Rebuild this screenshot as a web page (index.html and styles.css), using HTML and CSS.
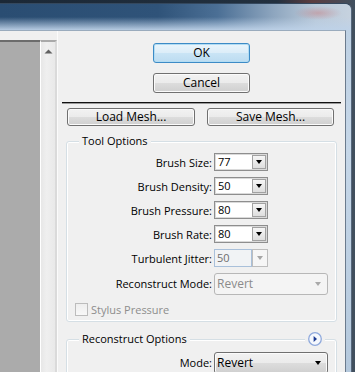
FILE: index.html
```html
<!DOCTYPE html>
<html>
<head>
    <title>Liquify</title>
    <link rel="stylesheet" href="styles.css">
</head>
<body>
    <div class="window">
        <div class="titlebar"></div>
        <div class="client">
            <div class="preview">
                <div class="canvas"></div>
                <div class="scrollbar">
                    <svg class="scroll-arrow" width="9" height="5" viewBox="0 0 9 5">
                        <path d="M0.5 4.5 L4.5 0.5 L8.5 4.5 Z" fill="#616161"/>
                    </svg>
                </div>
            </div>

            <div class="panel">
                <div class="dialog-buttons">
                    <button class="button default">OK</button>
                    <button class="button">Cancel</button>
                </div>

                <div class="rule"></div>

                <div class="mesh-buttons">
                    <button class="button small load">Load Mesh...</button>
                    <button class="button small save">Save Mesh...</button>
                </div>

                <fieldset class="group tool-options">
                    <legend><span class="legend-text">Tool Options</span></legend>

                    <div class="row">
                        <span class="label">Brush Size:</span>
                        <div class="combo"><span class="value">77</span><span class="drop"><i class="arrow"></i></span></div>
                    </div>
                    <div class="row">
                        <span class="label">Brush Density:</span>
                        <div class="combo"><span class="value">50</span><span class="drop"><i class="arrow"></i></span></div>
                    </div>
                    <div class="row">
                        <span class="label">Brush Pressure:</span>
                        <div class="combo"><span class="value">80</span><span class="drop"><i class="arrow"></i></span></div>
                    </div>
                    <div class="row">
                        <span class="label">Brush Rate:</span>
                        <div class="combo"><span class="value">80</span><span class="drop"><i class="arrow"></i></span></div>
                    </div>
                    <div class="row">
                        <span class="label">Turbulent Jitter:</span>
                        <div class="combo disabled"><span class="value">50</span><span class="drop"><i class="arrow"></i></span></div>
                    </div>
                    <div class="row row-select">
                        <span class="label">Reconstruct Mode:</span>
                        <div class="select disabled"><span class="value">Revert</span><i class="arrow"></i></div>
                    </div>
                    <div class="row row-check">
                        <span class="checkbox disabled"></span>
                        <span class="check-label">Stylus Pressure</span>
                    </div>
                </fieldset>

                <fieldset class="group reconstruct-options">
                    <legend class="wide">
                        <span class="legend-text">Reconstruct Options</span>
                        <span class="legend-line"></span>
                        <svg class="flyout" width="14" height="14" viewBox="0 0 14 14">
                            <circle cx="7" cy="7" r="6.3" fill="#f5f8fd" stroke="#8fa9dc" stroke-width="1.3"/>
                            <path d="M5.6 4 L9 7 L5.6 10 Z" fill="#1c3b93"/>
                        </svg>
                    </legend>

                    <div class="row row-select">
                        <span class="label">Mode:</span>
                        <div class="select"><span class="value">Revert</span><i class="arrow"></i></div>
                    </div>
                </fieldset>
            </div>
        </div>
    </div>
</body>
</html>
```

FILE: styles.css
```css
body {
    margin: 0;
    height: 372px;
    overflow: hidden;
    background: linear-gradient(to right, #1b2836 0%, #22303f 78%, #5b3d40 88%, #40505f 100%);
    font-family: "Open Sans", Arial, sans-serif;
    font-size: 11px;
    color: #000;
}

/* window frame */
.window {
    margin-top: 3px;
    width: 351px;
    height: 369px;
    border-top: 1px solid #34485e;
    border-right: 1px solid #56687c;
    border-top-right-radius: 7px;
    background: linear-gradient(to bottom, #bccfe2, #c6d7e8 40%, #b4c8dc);
    display: flex;
    flex-direction: column;
    overflow: hidden;
}
.titlebar {
    height: 26px;
    flex-shrink: 0;
    background:
        radial-gradient(ellipse 24px 7px at 318px 9px, rgba(200, 120, 122, 0.45), rgba(200, 120, 122, 0)),
        linear-gradient(to bottom, rgba(190, 210, 232, 0) 50%, rgba(190, 210, 232, 0.95) 100%),
        linear-gradient(to right, #2a4d72 0%, #2f5379 45%, #4b6f95 62%, #8ea6bf 78%, #b9c9d9 90%, #c6d2df 100%);
}
.client {
    flex: 1;
    display: flex;
    margin-right: 5px;
    background: #f0f0f0;
    border-top: 1px solid #9aabbd;
    border-right: 1px solid #6b7b8d;
}

/* preview area on the left */
.preview {
    display: flex;
    margin-top: 9px;
    width: 57px;
    flex-shrink: 0;
}
.canvas {
    width: 40px;
    background: #ababab;
    border-top: 2px solid #6c6c6c;
}
.scrollbar {
    width: 14px;
    display: flex;
    justify-content: center;
    align-items: flex-start;
    padding-top: 7px;
    background: linear-gradient(to right, #e7e7e7, #efefef 40%, #e9e9e9);
    border-top: 2px solid #a9a9a9;
    border-left: 1px solid #fff;
    border-right: 2px solid #dadada;
}

/* right panel */
.panel {
    flex: 1;
    display: flex;
    flex-direction: column;
    padding-top: 12px;
    border-left: 1px solid #fbfbfb;
}
.button {
    font-family: "Open Sans", Arial, sans-serif;
    font-size: 12px;
    color: #000;
    padding: 0;
    border: 1px solid #707070;
    border-radius: 3px;
    background: linear-gradient(#f2f2f2 0%, #ebebeb 50%, #dddddd 50%, #cfcfcf 100%);
    box-shadow: inset 0 0 0 1px #fbfbfb;
    cursor: pointer;
}
.dialog-buttons {
    display: flex;
    flex-direction: column;
    gap: 10px;
    margin-left: 95px;
}
.dialog-buttons .button {
    width: 97px;
    height: 20px;
    line-height: 16px;
}
.button.default {
    border-color: #3c8bc6;
    background: linear-gradient(#e9f5fc 0%, #dcedf8 48%, #c9e4f5 52%, #bcdcf1 100%);
    box-shadow: inset 0 0 0 1px #b2dcf3;
}
.rule {
    height: 1px;
    margin: 9px 4px 0 4px;
    background: #111;
    box-shadow: 0 1px 0 #9a9a9a;
}
.mesh-buttons {
    display: flex;
    gap: 12px;
    margin: 5px 0 0 9px;
}
.button.small {
    height: 18px;
    line-height: 14px;
}
.button.load {
    width: 128px;
}
.button.save {
    width: 127px;
}

/* group boxes */
.group {
    width: 269px;
    margin: 8px 0 0 8px;
    padding: 5px 0 5px 0;
    border: 1px solid #d5dfe5;
    border-radius: 3px;
    box-shadow: inset 0 0 0 1px #fff;
}
.reconstruct-options {
    margin-top: 10px;
    flex: 1;
}
.group legend {
    margin-left: 12px;
    padding: 0;
    line-height: 14px;
    background: #f0f0f0;
}
.legend-text {
    padding: 0 3px;
}
.group legend.wide {
    display: flex;
    align-items: center;
    width: 246px;
}
.legend-line {
    flex: 1;
    height: 0;
    border-top: 1px solid #d5dfe5;
    border-bottom: 1px solid #fff;
    margin-top: 1px;
}
.flyout {
    margin: 0 3px;
}

/* rows */
.row {
    display: flex;
    align-items: center;
    gap: 2px;
    height: 18px;
    margin-bottom: 6px;
}
.label {
    width: 145px;
    text-align: right;
    white-space: nowrap;
}
.row-select {
    height: 21px;
    margin-top: 1px;
    margin-bottom: 0;
}
.row-check {
    height: 13px;
    margin: 9px 0 0 8px;
    gap: 3px;
}

.combo {
    display: flex;
    width: 52px;
    height: 16px;
    border: 1px solid #8e8e8e;
    background: #fff;
    box-shadow: inset 0 0 0 1px #dadada;
}
.combo .value {
    flex: 1;
    padding-left: 3px;
    line-height: 16px;
}
.combo .drop {
    display: flex;
    align-items: center;
    justify-content: center;
    width: 12px;
    margin: 1px 1px 1px 0;
    border: 1px solid #a2a2a2;
    background: linear-gradient(#f6f6f6, #dedede);
}
.arrow {
    display: block;
    width: 0;
    height: 0;
    border-left: 3.5px solid transparent;
    border-right: 3.5px solid transparent;
    border-top: 4px solid #000;
}
.combo.disabled {
    width: 54px;
    height: 18px;
    border: none;
    box-shadow: none;
    background: none;
}
.combo.disabled .value {
    border: 1px solid #a9c0da;
    background: #f1f3f5;
    color: #6d6d6d;
    line-height: 16px;
    padding-left: 2px;
}
.combo.disabled .drop {
    width: 14px;
    margin: 0;
    border: 1px solid #bdbdbd;
    background: #f6f6f6;
}
.combo.disabled .arrow {
    border-top-color: #a6a6a6;
}

.select {
    display: flex;
    align-items: center;
    width: 104px;
    height: 20px;
    padding: 0 6px 0 2px;
    border: 1px solid #707070;
    border-radius: 3px;
    background: linear-gradient(#f2f2f2 0%, #ebebeb 50%, #dddddd 50%, #cfcfcf 100%);
    box-shadow: inset 0 0 0 1px #fbfbfb;
}
.select .value {
    flex: 1;
    font-size: 12px;
}
.select.disabled {
    border-color: #b7b7b7;
    background: #f4f4f4;
    box-shadow: none;
}
.select.disabled .value {
    color: #8b8b8b;
}
.select.disabled .arrow {
    border-top-color: #a9a9a9;
}
.reconstruct-options .row-select {
    height: 23px;
    margin-top: 0;
}

.checkbox {
    width: 11px;
    height: 11px;
    border: 1px solid #bcbcbc;
    background: linear-gradient(#eeeeee, #f8f8f8);
}
.check-label {
    color: #8d8d8d;
}
```
